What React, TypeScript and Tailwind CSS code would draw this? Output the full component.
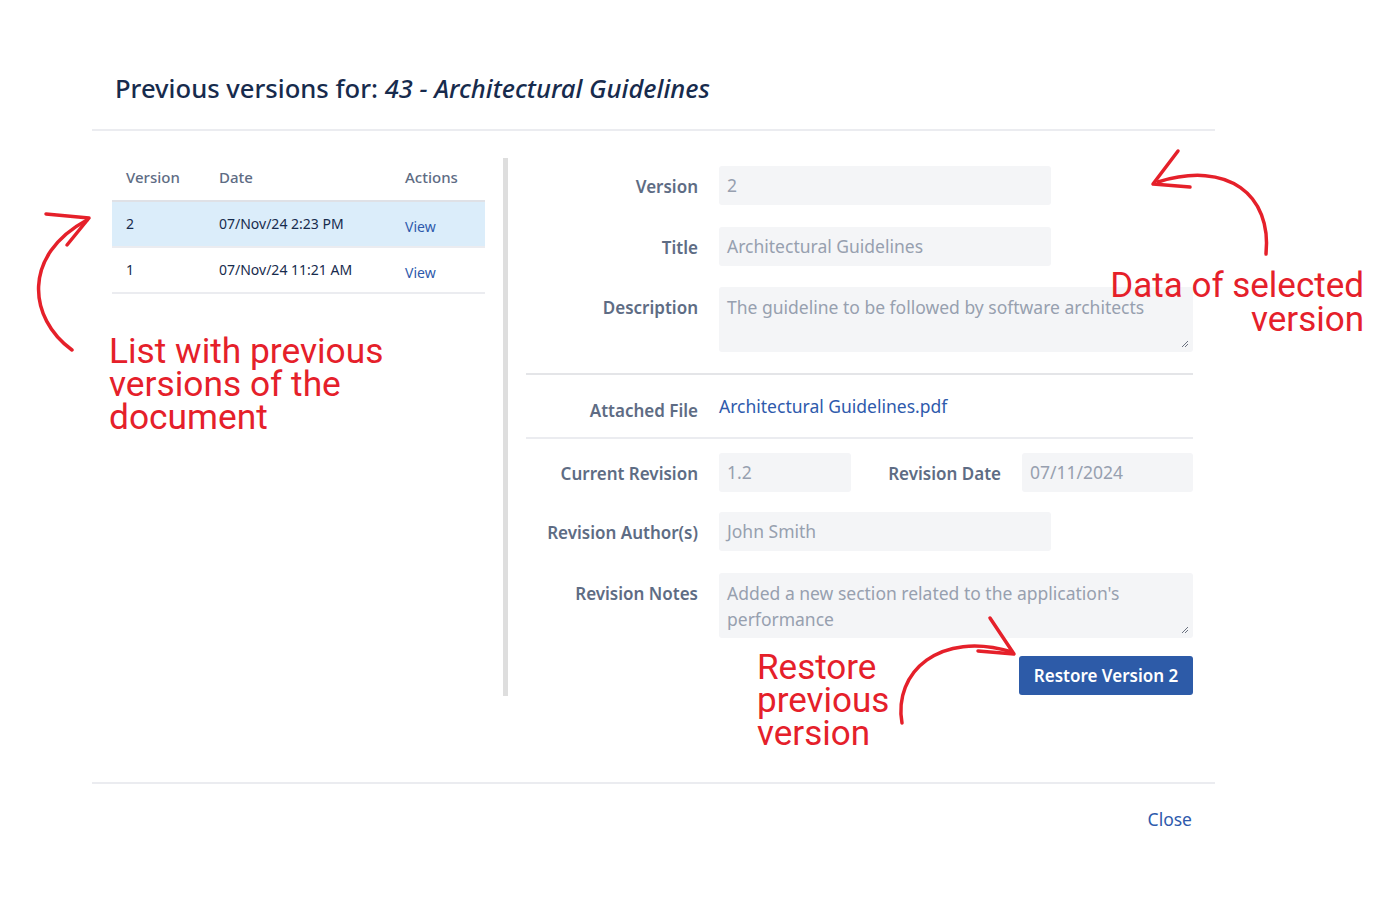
import React from 'react';

const versions = [
  { version: '2', date: '07/Nov/24 2:23 PM', selected: true },
  { version: '1', date: '07/Nov/24 11:21 AM', selected: false },
];

const uiFont = { fontFamily: '"Noto Sans", "Open Sans", sans-serif' };

const Field: React.FC<{ value: string; width: string }> = ({ value, width }) => (
  <div className={`${width} h-[39px] rounded-[3px] bg-[#f4f5f7] px-2 flex items-center text-[17.5px] text-[#97a0af]`}>
    {value}
  </div>
);

const Label: React.FC<{ children: React.ReactNode; className?: string }> = ({ children, className = 'pt-[2px]' }) => (
  <div className={`w-[172px] shrink-0 text-right text-[17px] font-semibold text-[#5e6c84] ${className}`}>{children}</div>
);

const App: React.FC = () => {
  return (
    <div className="relative w-full h-[917px] bg-white overflow-hidden" style={uiFont}>
      {/* Modal */}
      <div className="ml-[92px] w-[1123px] pt-[70px]">
        <div className="pl-[23px] pb-[22px] border-b-2 border-[#ebecf0]">
          <h1 className="text-[25.6px] font-medium text-[#172b4d] leading-[37px]">
            Previous versions for: <span className="italic">43 - Architectural Guidelines</span>
          </h1>
        </div>

        <div className="flex pl-[20px] pr-[22px] pt-[27px] pb-[86px] border-b-2 border-[#ebecf0]">
          {/* Versions table */}
          <div className="w-[373px] shrink-0">
            <div className="flex h-[44px] items-center pb-[3px] border-b-2 border-[#dfe1e6] text-[15px] text-[#5e6c84] font-medium">
              <div className="w-[107px] pl-[14px]">Version</div>
              <div className="w-[186px]">Date</div>
              <div className="flex-1">Actions</div>
            </div>
            {versions.map(v => (
              <div
                key={v.version}
                className={`flex h-[46px] items-center border-b-2 border-[#ebecf0] text-[14px] text-[#172b4d] ${v.selected ? 'bg-[#dbedfa]' : ''}`}
              >
                <div className="w-[107px] pl-[14px] pb-[2px]">{v.version}</div>
                <div className="w-[186px] pb-[2px]">{v.date}</div>
                <div className="flex-1 pt-[4px] text-[#2e5aac]">View</div>
              </div>
            ))}
          </div>

          <div className="ml-[18px] w-[5px] h-[538px] bg-[#dedede] shrink-0" />

          {/* Detail form */}
          <div className="ml-[18px] flex-1 pt-[8px]">
            <div className="flex items-center gap-[21px]">
              <Label>Version</Label>
              <Field value="2" width="w-[332px]" />
            </div>
            <div className="flex items-center gap-[21px] mt-[22px]">
              <Label>Title</Label>
              <Field value="Architectural Guidelines" width="w-[332px]" />
            </div>
            <div className="flex gap-[21px] mt-[21px]">
              <Label className="pt-[8px]">Description</Label>
              <div className="relative flex-1 h-[65px] rounded-[3px] bg-[#f4f5f7] px-2 pt-[7px] text-[17.5px] text-[#97a0af] leading-[26px]">
                The guideline to be followed by software architects
                <Grip />
              </div>
            </div>

            <div className="mt-[21px] border-t-2 border-[#e4e5e8]" />
            <div className="flex gap-[21px] h-[62px] items-center">
              <Label className="pt-[10px]">Attached File</Label>
              <div className="text-[17.5px] text-[#2e5aac]">Architectural Guidelines.pdf</div>
            </div>
            <div className="border-t-2 border-[#ebecf0]" />

            <div className="flex items-center gap-[21px] mt-[14px]">
              <Label>Current Revision</Label>
              <Field value="1.2" width="w-[132px]" />
              <div className="w-[129px] pt-[2px] text-right text-[17px] font-semibold text-[#5e6c84]">Revision Date</div>
              <Field value="07/11/2024" width="flex-1" />
            </div>
            <div className="flex items-center gap-[21px] mt-[20px]">
              <Label>Revision Author(s)</Label>
              <Field value="John Smith" width="w-[332px]" />
            </div>
            <div className="flex gap-[21px] mt-[22px]">
              <Label className="pt-[8px]">Revision Notes</Label>
              <div className="relative flex-1 h-[65px] rounded-[3px] bg-[#f4f5f7] px-2 pt-[7px] text-[17.5px] text-[#97a0af] leading-[26px]">
                Added a new section related to the application's performance
                <Grip />
              </div>
            </div>
            <div className="flex justify-end mt-[18px]">
              <button className="h-[39px] w-[174px] rounded-[3px] bg-[#2d5ba8] text-white text-[17px] font-semibold">
                Restore Version 2
              </button>
            </div>
          </div>
        </div>

        <div className="flex justify-end pr-[23px] pt-[22px]">
          <span className="text-[17.5px] text-[#2e5aac]">Close</span>
        </div>
      </div>

      {/* Annotations */}
      <Annotations />
    </div>
  );
};

const Grip: React.FC = () => (
  <svg className="absolute right-[4px] bottom-[4px]" width="9" height="9" viewBox="0 0 9 9">
    <path d="M8 2 L2 8 M8 5 L5 8" stroke="#6b7280" strokeWidth="1" />
  </svg>
);

const Annotations: React.FC = () => {
  const red = '#e5202a';
  const annoFont = { fontFamily: 'Roboto, "Liberation Sans", sans-serif' };
  return (
    <>
      <svg className="absolute left-0 top-0 pointer-events-none" width="1389" height="917" viewBox="0 0 1389 917">
        <g fill="none" stroke={red} strokeWidth="3.5" strokeLinecap="round" strokeLinejoin="round">
          {/* left */}
          <path d="M72 350 C28 318 22 255 87 220" />
          <path d="M46 214 L89 218 L67 245" />
          {/* top right */}
          <path d="M1266 254 C1272 195 1228 160 1158 182" />
          <path d="M1178 151 L1153 184 L1190 187" />
          {/* bottom */}
          <path d="M902 723 C893 672 940 630 1012 652" />
          <path d="M990 618 L1014 654 L978 651" />
        </g>
      </svg>
      <div
        className="absolute left-[109px] top-[335px] text-[35.3px] leading-[33px] text-[#e5202a] pointer-events-none"
        style={annoFont}
      >
        List with previous
        <br />
        versions of the
        <br />
        document
      </div>
      <div
        className="absolute right-[25px] top-[269px] text-right text-[35px] leading-[34px] text-[#e5202a] pointer-events-none"
        style={annoFont}
      >
        Data of selected
        <br />
        version
      </div>
      <div
        className="absolute left-[757px] top-[651px] text-[35px] leading-[33px] text-[#e5202a] pointer-events-none"
        style={annoFont}
      >
        Restore
        <br />
        previous
        <br />
        version
      </div>
    </>
  );
};

export default App;
